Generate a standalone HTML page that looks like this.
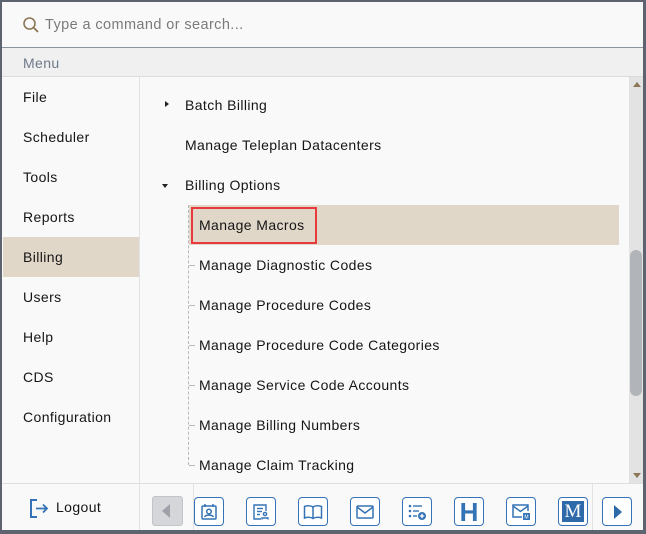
<!DOCTYPE html>
<html><head><style>
*{margin:0;padding:0;box-sizing:border-box}
body{width:646px;height:534px;background:#5d6470;position:relative;overflow:hidden;font-family:"Liberation Sans",sans-serif;color:#151515}
#w{position:absolute;left:2px;top:2px;width:641px;height:528px;background:#f9f9f9}
.a{position:absolute}
.t{position:absolute;font-size:14px;letter-spacing:0.4px;white-space:nowrap;line-height:16px}
.btn{position:absolute;top:495px;width:30px;height:29px;border:1.5px solid #3473b5;border-radius:4px;background:#fff;display:flex;align-items:center;justify-content:center}
</style></head><body>
<div id="w">
<svg class="a" style="left:20px;top:14px" width="18" height="18" viewBox="0 0 18 18"><circle cx="7.5" cy="7.5" r="5.5" fill="none" stroke="#8c7656" stroke-width="1.6"/><line x1="11.5" y1="11.5" x2="16" y2="16" stroke="#8c7656" stroke-width="1.8"/></svg>
<div class="t" style="left:43px;top:15px;color:#7a7a7a;font-size:14.5px">Type a command or search...</div>
<div class="a" style="left:0;top:45px;width:641px;height:1px;background:#8a93a0"></div>
<div class="a" style="left:0;top:46px;width:641px;height:28px;background:#f0f0f0"></div>
<div class="t" style="left:21px;top:53px;color:#6d7a88">Menu</div>
<div class="a" style="left:0;top:74px;width:641px;height:1px;background:#dcdcdc"></div>
<div class="a" style="left:137px;top:75px;width:1px;height:453px;background:#e2e2e2"></div>
<div class="a" style="left:1px;top:235px;width:136px;height:40px;background:#e0d7c9"></div>
<div class="t" style="left:21px;top:87px">File</div>
<div class="t" style="left:21px;top:127px">Scheduler</div>
<div class="t" style="left:21px;top:167px">Tools</div>
<div class="t" style="left:21px;top:207px">Reports</div>
<div class="t" style="left:21px;top:247px">Billing</div>
<div class="t" style="left:21px;top:287px">Users</div>
<div class="t" style="left:21px;top:327px">Help</div>
<div class="t" style="left:21px;top:367px">CDS</div>
<div class="t" style="left:21px;top:407px">Configuration</div>
<div class="a" style="left:163px;top:99px;width:0;height:0;border-top:3px solid transparent;border-bottom:3px solid transparent;border-left:4px solid #222"></div>
<div class="t" style="left:183px;top:95px">Batch Billing</div>
<div class="t" style="left:183px;top:135px">Manage Teleplan Datacenters</div>
<div class="a" style="left:160px;top:182px;width:0;height:0;border-left:3px solid transparent;border-right:3px solid transparent;border-top:4px solid #222"></div>
<div class="t" style="left:183px;top:175px">Billing Options</div>
<div class="a" style="left:187px;top:203px;width:430px;height:40px;background:#e0d7c9"></div>
<div class="a" style="left:189px;top:205px;width:126px;height:37px;border:2px solid #e8393d"></div>
<div class="a" style="left:186px;top:203px;height:260px;border-left:1px dashed #b8b8b8"></div>
<div class="t" style="left:197px;top:215px">Manage Macros</div>
<div class="t" style="left:197px;top:255px">Manage Diagnostic Codes</div>
<div class="t" style="left:197px;top:295px">Manage Procedure Codes</div>
<div class="t" style="left:197px;top:335px">Manage Procedure Code Categories</div>
<div class="t" style="left:197px;top:375px">Manage Service Code Accounts</div>
<div class="t" style="left:197px;top:415px">Manage Billing Numbers</div>
<div class="t" style="left:197px;top:455px">Manage Claim Tracking</div>
<div class="a" style="left:187px;top:263px;width:6px;border-top:1px dashed #b8b8b8"></div>
<div class="a" style="left:187px;top:303px;width:6px;border-top:1px dashed #b8b8b8"></div>
<div class="a" style="left:187px;top:343px;width:6px;border-top:1px dashed #b8b8b8"></div>
<div class="a" style="left:187px;top:383px;width:6px;border-top:1px dashed #b8b8b8"></div>
<div class="a" style="left:187px;top:423px;width:6px;border-top:1px dashed #b8b8b8"></div>
<div class="a" style="left:187px;top:463px;width:6px;border-top:1px dashed #b8b8b8"></div>
<div class="a" style="left:627px;top:75px;width:14px;height:406px;background:#e3e3e3"></div>
<div class="a" style="left:631px;top:80px;width:0;height:0;border-left:4px solid transparent;border-right:4px solid transparent;border-bottom:5px solid #8c7656"></div>
<div class="a" style="left:631px;top:471px;width:0;height:0;border-left:4px solid transparent;border-right:4px solid transparent;border-top:5px solid #8c7656"></div>
<div class="a" style="left:628px;top:248px;width:12px;height:146px;background:#b1b4b9;border-radius:6px"></div>
<div class="a" style="left:0;top:481px;width:641px;height:1px;background:#dedede"></div>
<div class="a" style="left:191px;top:482px;width:1px;height:46px;background:#e2e2e2"></div>
<div class="a" style="left:590px;top:482px;width:1px;height:46px;background:#e2e2e2"></div>
<svg class="a" style="left:27px;top:497px" width="22" height="20" viewBox="0 0 22 20"><path d="M8 1H2V18H8" fill="none" stroke="#3473b5" stroke-width="2"/><path d="M7 9.5H18M14 5.5L18 9.5L14 13.5" fill="none" stroke="#3473b5" stroke-width="1.8"/></svg>
<div class="t" style="left:54px;top:497px">Logout</div>
<div class="a" style="left:150px;top:494px;width:31px;height:30px;background:#d4d6d9;border:1.5px solid #c2c4c8;border-radius:3px"></div>
<div class="a" style="left:160px;top:502px;width:0;height:0;border-top:7px solid transparent;border-bottom:7px solid transparent;border-right:8px solid #9ea2a8"></div>
<div class="btn" style="left:192px"><svg width="18" height="18" viewBox="0 0 18 18" fill="none" stroke="#3473b5" stroke-width="1.5"><rect x="2" y="3" width="14" height="13" rx="1"/><line x1="5" y1="1" x2="5" y2="4"/><line x1="13" y1="1" x2="13" y2="4"/><circle cx="9" cy="8.5" r="2.3"/><path d="M4.5 14c1-2.5 8-2.5 9 0"/></svg></div>
<div class="btn" style="left:244px"><svg width="18" height="18" viewBox="0 0 18 18" fill="none" stroke="#3473b5" stroke-width="1.4"><path d="M9 16H2V2H14V8"/><line x1="5" y1="5.5" x2="11" y2="5.5"/><line x1="5" y1="8.5" x2="10" y2="8.5"/><line x1="5" y1="11.5" x2="8" y2="11.5"/><circle cx="13" cy="11" r="1.6"/><path d="M10 16.5v-1.5h6v1.5"/></svg></div>
<div class="btn" style="left:296px"><svg width="20" height="16" viewBox="0 0 20 16" fill="none" stroke="#3473b5" stroke-width="1.5"><path d="M10 3C8 1.5 4 1.5 1.5 2.5V14C4 13 8 13 10 14.5C12 13 16 13 18.5 14V2.5C16 1.5 12 1.5 10 3Z"/><line x1="10" y1="3" x2="10" y2="14.5"/></svg></div>
<div class="btn" style="left:348px"><svg width="20" height="16" viewBox="0 0 20 16" fill="none" stroke="#3473b5" stroke-width="1.5"><rect x="2" y="2" width="16" height="12" rx="1"/><path d="M2 3L10 9L18 3"/></svg></div>
<div class="btn" style="left:400px"><svg width="20" height="18" viewBox="0 0 20 18" fill="#3473b5"><circle cx="3" cy="3" r="1.3"/><circle cx="3" cy="8" r="1.3"/><circle cx="3" cy="13" r="1.3"/><rect x="6" y="2.3" width="9" height="1.4"/><rect x="6" y="7.3" width="6" height="1.4"/><rect x="6" y="12.3" width="4" height="1.4"/><circle cx="15" cy="13" r="4"/><path d="M15 10.8v4.4M12.8 13h4.4" stroke="#fff" stroke-width="1.3"/></svg></div>
<div class="btn" style="left:452px"><span style="color:#3473b5;font-weight:bold;font-size:26px;line-height:26px">H</span></div>
<div class="btn" style="left:504px"><svg width="20" height="18" viewBox="0 0 20 18" fill="none" stroke="#3473b5" stroke-width="1.5"><path d="M11 14H2V2H17V8"/><path d="M2 3L9.5 8.5L17 3"/><rect x="12" y="10" width="7" height="7" fill="#3473b5" stroke="none"/><text x="15.5" y="15.5" font-size="5" fill="#fff" stroke="none" text-anchor="middle" font-family="Liberation Sans">M</text></svg></div>
<div class="btn" style="left:556px"><div style="width:22px;height:21px;background:#2e6aaa;color:#fff;font-family:'Liberation Serif',serif;font-size:19px;line-height:21px;text-align:center">M</div></div>
<div class="btn" style="left:600px"><div style="width:0;height:0;border-top:7px solid transparent;border-bottom:7px solid transparent;border-left:8px solid #2e6aaa;margin-left:2px"></div></div>
</div>
</body></html>
